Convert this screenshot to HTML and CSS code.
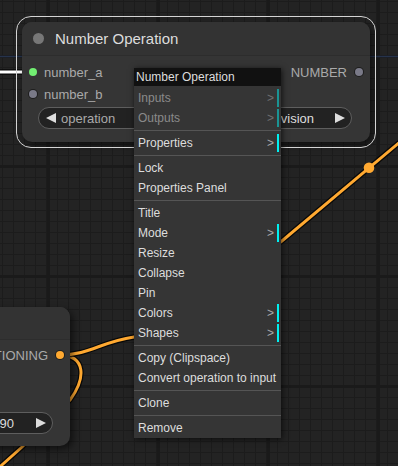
FILE: index.html
```html
<!DOCTYPE html>
<html>
<head>
<meta charset="utf-8">
<link rel="stylesheet" href="styles.css">
</head>
<body>
<div class="canvas">
  <svg class="links" width="398" height="466" viewBox="0 0 398 466">
    <line class="grid-accent" x1="0" y1="56.5" x2="398" y2="56.5"/>
    <path class="link-bg" d="M-2,72 L24,72"/>
    <path class="link-white" d="M-2,72 L24,72"/>
    <path class="link-bg" d="M60,355 C86,356 86,378 70,400 L22,447 L-6,472"/>
    <path class="link-orange" d="M60,355 C86,356 86,378 70,400 L22,447 L-6,472"/>
    <path class="link-bg" d="M60,355 C90,355 100,342 134,337 L281,241.7 L404,138.6"/>
    <path class="link-orange" d="M60,355 C90,355 100,342 134,337 L281,241.7 L404,138.6"/>
    <circle class="link-mid" cx="369" cy="167.7" r="5.3"/>
  </svg>

  <div class="node node-cond">
    <div class="node-title node-title-cond"></div>
    <div class="node-body body-cond">
      <div class="slot-row slot-row-right">
        <div class="slot-out out-cond"><span class="slot-label label-out">CONDITIONING</span><span class="dot dot-cond"></span></div>
      </div>
      <div class="widget widget-cond">
        <span class="arrow-left"></span><span class="w-name">strength</span><span class="w-value value-cond">0.90</span><span class="arrow-right"></span>
      </div>
    </div>
  </div>

  <div class="node node-top">
    <div class="node-title"><span class="title-dot"></span><span class="title-text">Number Operation</span></div>
    <div class="node-body">
      <div class="slot-row">
        <div class="slot-in"><span class="dot dot-green"></span><span class="slot-label">number_a</span></div>
        <div class="slot-out"><span class="slot-label label-out">NUMBER</span><span class="dot dot-number"></span></div>
      </div>
      <div class="slot-row">
        <div class="slot-in"><span class="dot dot-number"></span><span class="slot-label">number_b</span></div>
      </div>
      <div class="widget">
        <span class="arrow-left"></span><span class="w-name">operation</span><span class="w-value">division</span><span class="arrow-right"></span>
      </div>
    </div>
  </div>
  <div class="selection"></div>

  <div class="menu">
    <div class="menu-title">Number Operation</div>
    <div class="menu-entry submenu disabled"><span>Inputs</span><span class="sub">&gt;</span></div>
    <div class="menu-entry submenu disabled"><span>Outputs</span><span class="sub">&gt;</span></div>
    <div class="separator"></div>
    <div class="menu-entry submenu"><span>Properties</span><span class="sub">&gt;</span></div>
    <div class="separator"></div>
    <div class="menu-entry"><span>Lock</span></div>
    <div class="menu-entry"><span>Properties Panel</span></div>
    <div class="separator"></div>
    <div class="menu-entry"><span>Title</span></div>
    <div class="menu-entry submenu"><span>Mode</span><span class="sub">&gt;</span></div>
    <div class="menu-entry"><span>Resize</span></div>
    <div class="menu-entry"><span>Collapse</span></div>
    <div class="menu-entry"><span>Pin</span></div>
    <div class="menu-entry submenu"><span>Colors</span><span class="sub">&gt;</span></div>
    <div class="menu-entry submenu"><span>Shapes</span><span class="sub">&gt;</span></div>
    <div class="separator"></div>
    <div class="menu-entry"><span>Copy (Clipspace)</span></div>
    <div class="menu-entry"><span>Convert operation to input</span></div>
    <div class="separator"></div>
    <div class="menu-entry"><span>Clone</span></div>
    <div class="separator"></div>
    <div class="menu-entry"><span>Remove</span></div>
  </div>
</div>
</body>
</html>
```

FILE: styles.css
```css
* { box-sizing: border-box; }
html, body { margin: 0; padding: 0; }
body {
  width: 398px;
  height: 466px;
  overflow: hidden;
  background: #222;
  font-family: "Liberation Sans", Arial, sans-serif;
}
.canvas {
  position: relative;
  width: 398px;
  height: 466px;
  overflow: hidden;
  background-color: #232323;
  background-image:
    linear-gradient(to right, #1a1a1a 3px, transparent 3px),
    linear-gradient(to bottom, #1a1a1a 3px, transparent 3px),
    linear-gradient(to right, #1c1c1c 1px, transparent 1px),
    linear-gradient(to bottom, #1c1c1c 1px, transparent 1px);
  background-size: 110px 110px, 110px 110px, 11px 11px, 11px 11px;
  background-position: 47px 0, 0 55px, 2px 0, 0 1px;
}
.links { position: absolute; left: 0; top: 0; }
.grid-accent { stroke: #26334c; stroke-width: 1.5; }
.link-bg { fill: none; stroke: rgba(0,0,0,0.75); stroke-width: 5.5; }
.link-orange { fill: none; stroke: #ffa931; stroke-width: 3; }
.link-white { fill: none; stroke: #ffffff; stroke-width: 3; }
.link-mid { fill: #ffa931; }

.node {
  position: absolute;
  background: #353535;
  border-radius: 10px;
  box-shadow: 3px 3px 7px rgba(0,0,0,0.55);
  color: #aaa;
  font-size: 13px;
}
.node-top { left: 22px; top: 22px; width: 348px; height: 120px; }
.node-cond { left: -230px; top: 307px; width: 300px; height: 139px; }

.node-title {
  height: 34px;
  display: flex;
  align-items: center;
  background: #333;
  border-radius: 10px 10px 0 0;
  border-bottom: 1px solid #2d2d2d;
  padding-left: 11px;
}
.node-title-cond { height: 33px; }
.title-dot {
  width: 11px;
  height: 11px;
  border-radius: 50%;
  background: #777;
  margin-right: 11px;
}
.title-text { color: #ddd; font-size: 15px; }

.node-body { padding-top: 5px; }
.body-cond { padding-top: 4px; }
.slot-row {
  height: 22px;
  display: flex;
  align-items: center;
  justify-content: space-between;
}
.slot-row-right { justify-content: flex-end; }
.slot-in { display: flex; align-items: center; padding-left: 7px; }
.slot-in .slot-label { margin-left: 7px; }
.slot-out { display: flex; align-items: center; padding-right: 7px; }
.out-cond { padding-right: 6px; }
.label-out { margin-right: 8px; }
.slot-label { color: #aaa; white-space: nowrap; }
.dot { width: 8px; height: 8px; border-radius: 50%; flex: none; }
.dot-green { background: #72ee72; }
.dot-number { background: #7a7a88; box-shadow: 0 0 0 1px #1e1e1e; }
.dot-cond { background: #ffa931; box-shadow: 0 0 0 1px #1e1e1e; }

.widget {
  margin: 2px 18px 0 16px;
  height: 22px;
  border-radius: 11px;
  background: #222;
  border: 1px solid #5e5e5e;
  display: flex;
  align-items: center;
  padding: 0 6px 0 7px;
  white-space: nowrap;
}
.widget-cond { margin: 46px 17px 0 16px; }
.arrow-left {
  width: 0; height: 0;
  border-top: 5px solid transparent;
  border-bottom: 5px solid transparent;
  border-right: 10px solid #ddd;
  flex: none;
}
.arrow-right {
  width: 0; height: 0;
  border-top: 5px solid transparent;
  border-bottom: 5px solid transparent;
  border-left: 10px solid #ddd;
  flex: none;
}
.w-name { color: #aaa; margin-left: 5px; }
.w-value { color: #ddd; margin-left: auto; margin-right: 21px; }
.value-cond { margin-right: 22px; }

.selection {
  position: absolute;
  left: 16px;
  top: 16px;
  width: 360px;
  height: 132px;
  border: 1px solid #d4d4d4;
  border-radius: 15px;
}

.menu {
  position: absolute;
  left: 134px;
  top: 68px;
  width: 147px;
  display: flex;
  flex-direction: column;
  background: #353535;
  box-shadow: 1px 1px 6px rgba(0,0,0,0.7);
  font-size: 12px;
  color: #ddd;
}
.menu-title {
  height: 18px;
  line-height: 18px;
  background: #111;
  padding-left: 2px;
  color: #ddd;
  margin-bottom: 2px;
  white-space: nowrap;
}
.menu-entry {
  height: 18px;
  line-height: 18px;
  margin: 1px 2px;
  padding-left: 2px;
  padding-right: 3px;
  display: flex;
  justify-content: space-between;
  border-right: 2px solid transparent;
  white-space: nowrap;
}
.menu-entry.submenu { border-right-color: #00f0f0; }
.menu-entry.disabled { opacity: 0.5; }
.sub { color: #aaa; }
.separator { height: 1px; background: #555; margin: 2px 0; flex: none; }
```
